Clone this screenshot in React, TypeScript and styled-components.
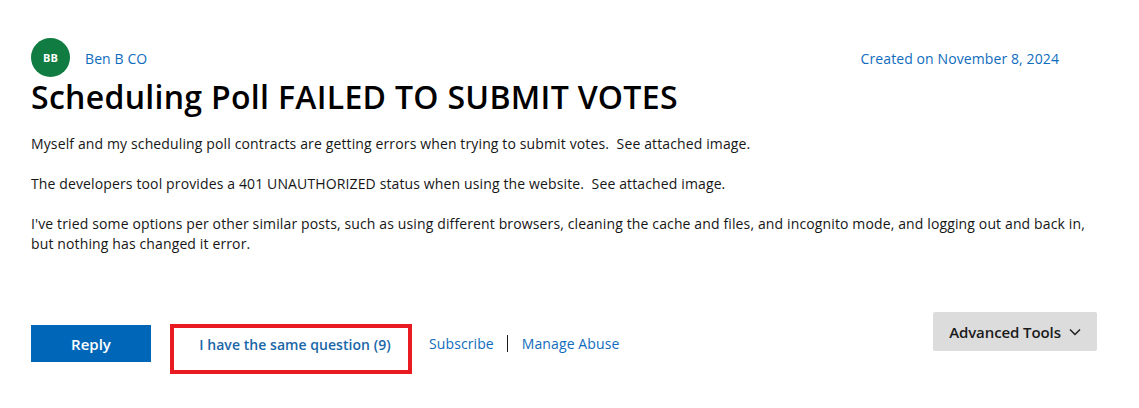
import React from "react";
import styled, { createGlobalStyle } from "styled-components";

const Global = createGlobalStyle`
  html, body { margin: 0; padding: 0; background: #ffffff; }
  body { font-family: "Segoe UI", "Open Sans", "Noto Sans", sans-serif; color: #1b1b1b; }
`;

const Page = styled.div`
  width: 1066px;
  padding: 37px 0 0 31px;
  display: flex;
  flex-direction: column;
`;

const Header = styled.div`
  display: flex;
  align-items: center;
  height: 40px;
`;

const Avatar = styled.div`
  width: 39px;
  height: 39px;
  border-radius: 50%;
  background: #107c41;
  color: #ffffff;
  display: flex;
  align-items: center;
  justify-content: center;
  font-size: 11px;
  font-weight: 700;
  letter-spacing: 0.2px;
`;

const AuthorLink = styled.a`
  margin-left: 15px;
  padding-top: 2px;
  color: #0f6cbd;
  font-size: 14px;
  text-decoration: none;
  letter-spacing: 0.1px;
`;

const CreatedOn = styled.span`
  margin-left: auto;
  margin-right: 38px;
  padding-top: 2px;
  color: #0f6cbd;
  font-size: 14px;
  letter-spacing: 0.1px;
`;

const Title = styled.h1`
  margin: 0 0 17px;
  font-size: 32px;
  line-height: 40px;
  font-weight: 600;
  color: #000000;
  letter-spacing: 0.3px;
`;

const Para = styled.p`
  margin: 0 0 20px;
  font-size: 14px;
  line-height: 20px;
  color: #161616;
  white-space: pre-wrap;
  letter-spacing: 0.13px;
`;

const Actions = styled.div`
  margin-top: 38px;
  display: flex;
  align-items: flex-start;
`;

const ReplyButton = styled.button`
  margin-top: 13px;
  width: 120px;
  height: 37px;
  border: none;
  background: #0067b8;
  color: #ffffff;
  font-family: inherit;
  font-size: 15px;
  font-weight: 600;
  cursor: pointer;
`;

const Highlight = styled.div`
  margin: 12px 0 0 19px;
  width: 242px;
  height: 50px;
  box-sizing: border-box;
  border: 4px solid #e81b23;
  display: flex;
  align-items: center;
  justify-content: center;
  padding: 0 0 10px 8px;
`;

const SameQuestion = styled.a`
  color: #1a66a8;
  font-size: 14px;
  font-weight: 600;
  text-decoration: none;
  letter-spacing: 0.05px;
`;

const Links = styled.div`
  margin: 20px 0 0 17px;
  display: flex;
  align-items: center;
  height: 22px;
`;

const TextLink = styled.a`
  color: #0f6cbd;
  font-size: 14px;
  text-decoration: none;
  letter-spacing: 0.1px;
`;

const Separator = styled.span`
  width: 1px;
  height: 17px;
  background: #1b1b1b;
  margin: 0 14px 0 13px;
`;

const ToolsButton = styled.button`
  margin-left: auto;
  height: 39px;
  width: 164px;
  border: none;
  border-radius: 2px;
  background: #dcdcdc;
  color: #1b1b1b;
  font-family: inherit;
  font-size: 15px;
  font-weight: 600;
  display: flex;
  align-items: center;
  justify-content: center;
  gap: 8px;
  letter-spacing: -0.1px;
  cursor: pointer;
`;

export default function App() {
  return (
    <>
      <Global />
      <Page>
        <Header>
          <Avatar>BB</Avatar>
          <AuthorLink href="#">Ben B CO</AuthorLink>
          <CreatedOn>Created on November 8, 2024</CreatedOn>
        </Header>
        <Title>Scheduling Poll FAILED TO SUBMIT VOTES</Title>
        <Para>{"Myself and my scheduling poll contracts are getting errors when trying to submit votes.  See attached image."}</Para>
        <Para>{"The developers tool provides a 401 UNAUTHORIZED status when using the website.  See attached image."}</Para>
        <Para>{"I've tried some options per other similar posts, such as using different browsers, cleaning the cache and files, and incognito mode, and logging out and back in, but nothing has changed it error."}</Para>
        <Actions>
          <ReplyButton>Reply</ReplyButton>
          <Highlight>
            <SameQuestion href="#">I have the same question (9)</SameQuestion>
          </Highlight>
          <Links>
            <TextLink href="#">Subscribe</TextLink>
            <Separator />
            <TextLink href="#">Manage Abuse</TextLink>
          </Links>
          <ToolsButton>
            Advanced Tools
            <svg width="12" height="8" viewBox="0 0 12 8" fill="none">
              <path d="M1 1.5L6 6.5L11 1.5" stroke="#1b1b1b" strokeWidth="1.4" />
            </svg>
          </ToolsButton>
        </Actions>
      </Page>
    </>
  );
}
